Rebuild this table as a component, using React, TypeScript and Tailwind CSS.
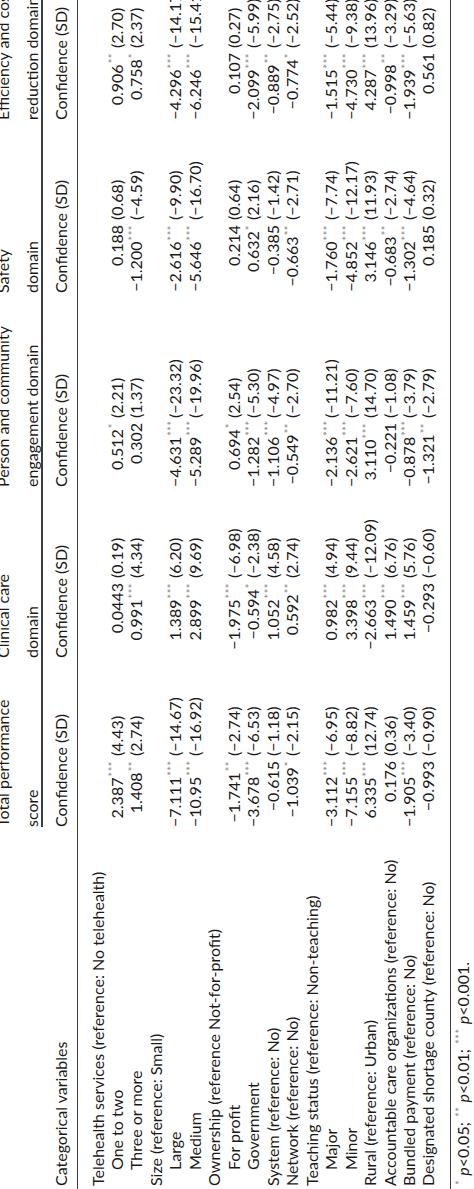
type Val = [string, string, string];
type Row = { label: string; sub?: boolean; vals?: Val[] };

const M = "\u2212";

const headers = [
  ["Total performance", "score"],
  ["Clinical care", "domain"],
  ["Person and community", "engagement domain"],
  ["Safety", "domain"],
  ["Efficiency and cost", "reduction domain"],
];

// coefficient box width per column (coef is right aligned, SD follows)
const coefW = ["w-[66px]", "w-[75px]", "w-[64px]", "w-[68px]", "w-[67px]"];

const rows: Row[] = [
  { label: "Telehealth services (reference: No telehealth)" },
  {
    label: "One to two",
    sub: true,
    vals: [
      ["2.387", "***", "(4.43)"],
      ["0.0443", "", "(0.19)"],
      ["0.512", "*", "(2.21)"],
      ["0.188", "", "(0.68)"],
      ["0.906", "**", "(2.70)"],
    ],
  },
  {
    label: "Three or more",
    sub: true,
    vals: [
      ["1.408", "**", "(2.74)"],
      ["0.991", "***", "(4.34)"],
      ["0.302", "", "(1.37)"],
      [M + "1.200", "***", "(" + M + "4.59)"],
      ["0.758", "*", "(2.37)"],
    ],
  },
  { label: "Size (reference: Small)" },
  {
    label: "Large",
    sub: true,
    vals: [
      [M + "7.111", "***", "(" + M + "14.67)"],
      ["1.389", "***", "(6.20)"],
      [M + "4.631", "***", "(" + M + "23.32)"],
      [M + "2.616", "***", "(" + M + "9.90)"],
      [M + "4.296", "***", "(" + M + "14.17)"],
    ],
  },
  {
    label: "Medium",
    sub: true,
    vals: [
      [M + "10.95", "***", "(" + M + "16.92)"],
      ["2.899", "***", "(9.69)"],
      [M + "5.289", "***", "(" + M + "19.96)"],
      [M + "5.646", "***", "(" + M + "16.70)"],
      [M + "6.246", "***", "(" + M + "15.41)"],
    ],
  },
  { label: "Ownership (reference Not-for-profit)" },
  {
    label: "For profit",
    sub: true,
    vals: [
      [M + "1.741", "**", "(" + M + "2.74)"],
      [M + "1.975", "***", "(" + M + "6.98)"],
      ["0.694", "*", "(2.54)"],
      ["0.214", "", "(0.64)"],
      ["0.107", "", "(0.27)"],
    ],
  },
  {
    label: "Government",
    sub: true,
    vals: [
      [M + "3.678", "***", "(" + M + "6.53)"],
      [M + "0.594", "*", "(" + M + "2.38)"],
      [M + "1.282", "***", "(" + M + "5.30)"],
      ["0.632", "*", "(2.16)"],
      [M + "2.099", "***", "(" + M + "5.99)"],
    ],
  },
  {
    label: "System (reference: No)",
    vals: [
      [M + "0.615", "", "(" + M + "1.18)"],
      ["1.052", "***", "(4.58)"],
      [M + "1.106", "***", "(" + M + "4.97)"],
      [M + "0.385", "", "(" + M + "1.42)"],
      [M + "0.889", "**", "(" + M + "2.75)"],
    ],
  },
  {
    label: "Network (reference: No)",
    vals: [
      [M + "1.039", "*", "(" + M + "2.15)"],
      ["0.592", "**", "(2.74)"],
      [M + "0.549", "**", "(" + M + "2.70)"],
      [M + "0.663", "**", "(" + M + "2.71)"],
      [M + "0.774", "*", "(" + M + "2.52)"],
    ],
  },
  { label: "Teaching status (reference: Non-teaching)" },
  {
    label: "Major",
    sub: true,
    vals: [
      [M + "3.112", "***", "(" + M + "6.95)"],
      ["0.982", "***", "(4.94)"],
      [M + "2.136", "***", "(" + M + "11.21)"],
      [M + "1.760", "***", "(" + M + "7.74)"],
      [M + "1.515", "***", "(" + M + "5.44)"],
    ],
  },
  {
    label: "Minor",
    sub: true,
    vals: [
      [M + "7.155", "***", "(" + M + "8.82)"],
      ["3.398", "***", "(9.44)"],
      [M + "2.621", "***", "(" + M + "7.60)"],
      [M + "4.852", "***", "(" + M + "12.17)"],
      [M + "4.730", "***", "(" + M + "9.38)"],
    ],
  },
  {
    label: "Rural (reference: Urban)",
    vals: [
      ["6.335", "***", "(12.74)"],
      [M + "2.663", "***", "(" + M + "12.09)"],
      ["3.110", "***", "(14.70)"],
      ["3.146", "***", "(11.93)"],
      ["4.287", "***", "(13.96)"],
    ],
  },
  {
    label: "Accountable care organizations (reference: No)",
    vals: [
      ["0.176", "", "(0.36)"],
      ["1.490", "***", "(6.76)"],
      [M + "0.221", "", "(" + M + "1.08)"],
      [M + "0.683", "**", "(" + M + "2.74)"],
      [M + "0.998", "**", "(" + M + "3.29)"],
    ],
  },
  {
    label: "Bundled payment (reference: No)",
    vals: [
      [M + "1.905", "***", "(" + M + "3.40)"],
      ["1.459", "***", "(5.76)"],
      [M + "0.878", "***", "(" + M + "3.79)"],
      [M + "1.302", "***", "(" + M + "4.64)"],
      [M + "1.939", "***", "(" + M + "5.63)"],
    ],
  },
  {
    label: "Designated shortage county (reference: No)",
    vals: [
      [M + "0.993", "", "(" + M + "0.90)"],
      [M + "0.293", "", "(" + M + "0.60)"],
      [M + "1.321", "**", "(" + M + "2.79)"],
      ["0.185", "", "(0.32)"],
      ["0.561", "", "(0.82)"],
    ],
  },
];

function Stars({ s }: { s: string }) {
  if (!s) return null;
  return <sup className="ml-[1px] text-[11px] tracking-[0.5px] text-[#858585]">{s}</sup>;
}

export default function App() {
  return (
    <div className="h-[1189px] w-[474px] overflow-hidden bg-white">
      {/* the table is printed sideways, so lay it out upright and turn it */}
      <div className="h-[474px] w-[1189px] origin-top-left -rotate-90 translate-y-[1189px] text-[16px] text-[#1a1a1a] [font-family:Lato,'Open_Sans',sans-serif]">
        <div className="grid h-[41px] grid-cols-[362px_169px_171px_194px_173px_120px]">
          <div />
          {headers.map((h) => (
            <div key={h[0]} className="-mt-[10px] whitespace-nowrap leading-[25.5px]">
              <div>{h[0]}</div>
              <div className="mt-[3px]">{h[1]}</div>
            </div>
          ))}
        </div>
        <div className="ml-[362px] h-[1.5px] bg-[#3c3c3c]" />

        <div className="grid h-[34px] grid-cols-[362px_169px_171px_194px_173px_120px] pt-[8.5px] leading-[19.5px]">
          <div className="pl-[3px]">Categorical variables</div>
          {headers.map((h) => (
            <div key={h[0]} className="whitespace-nowrap">
              Confidence (SD)
            </div>
          ))}
        </div>
        <div className="h-[1.5px] bg-[#3c3c3c]" />

        <div className="pt-[9.5px] pb-[12px] leading-[19.47px]">
          {rows.map((r) => (
            <div key={r.label} className="grid grid-cols-[362px_169px_171px_194px_173px_120px]">
              <div className={r.sub ? "pl-[19px] whitespace-nowrap" : "pl-[3px] whitespace-nowrap"}>{r.label}</div>
              {r.vals?.map((v, i) => (
                <div key={i} className="flex whitespace-nowrap">
                  <span className={coefW[i] + " shrink-0 text-right"}>
                    {v[0]}
                    <Stars s={v[1]} />
                  </span>
                  <span className="ml-[5px]">{v[2]}</span>
                </div>
              ))}
            </div>
          ))}
        </div>
        <div className="h-[1.5px] bg-[#3c3c3c]" />

        <div className="pl-[3px] pt-[2px] leading-[19.5px] whitespace-nowrap">
          <Stars s="*" /> <i>p</i>&lt;0.05; <Stars s="**" /> <i>p</i>&lt;0.01; <Stars s="***" /> <i>p</i>&lt;0.001.
        </div>
      </div>
    </div>
  );
}
